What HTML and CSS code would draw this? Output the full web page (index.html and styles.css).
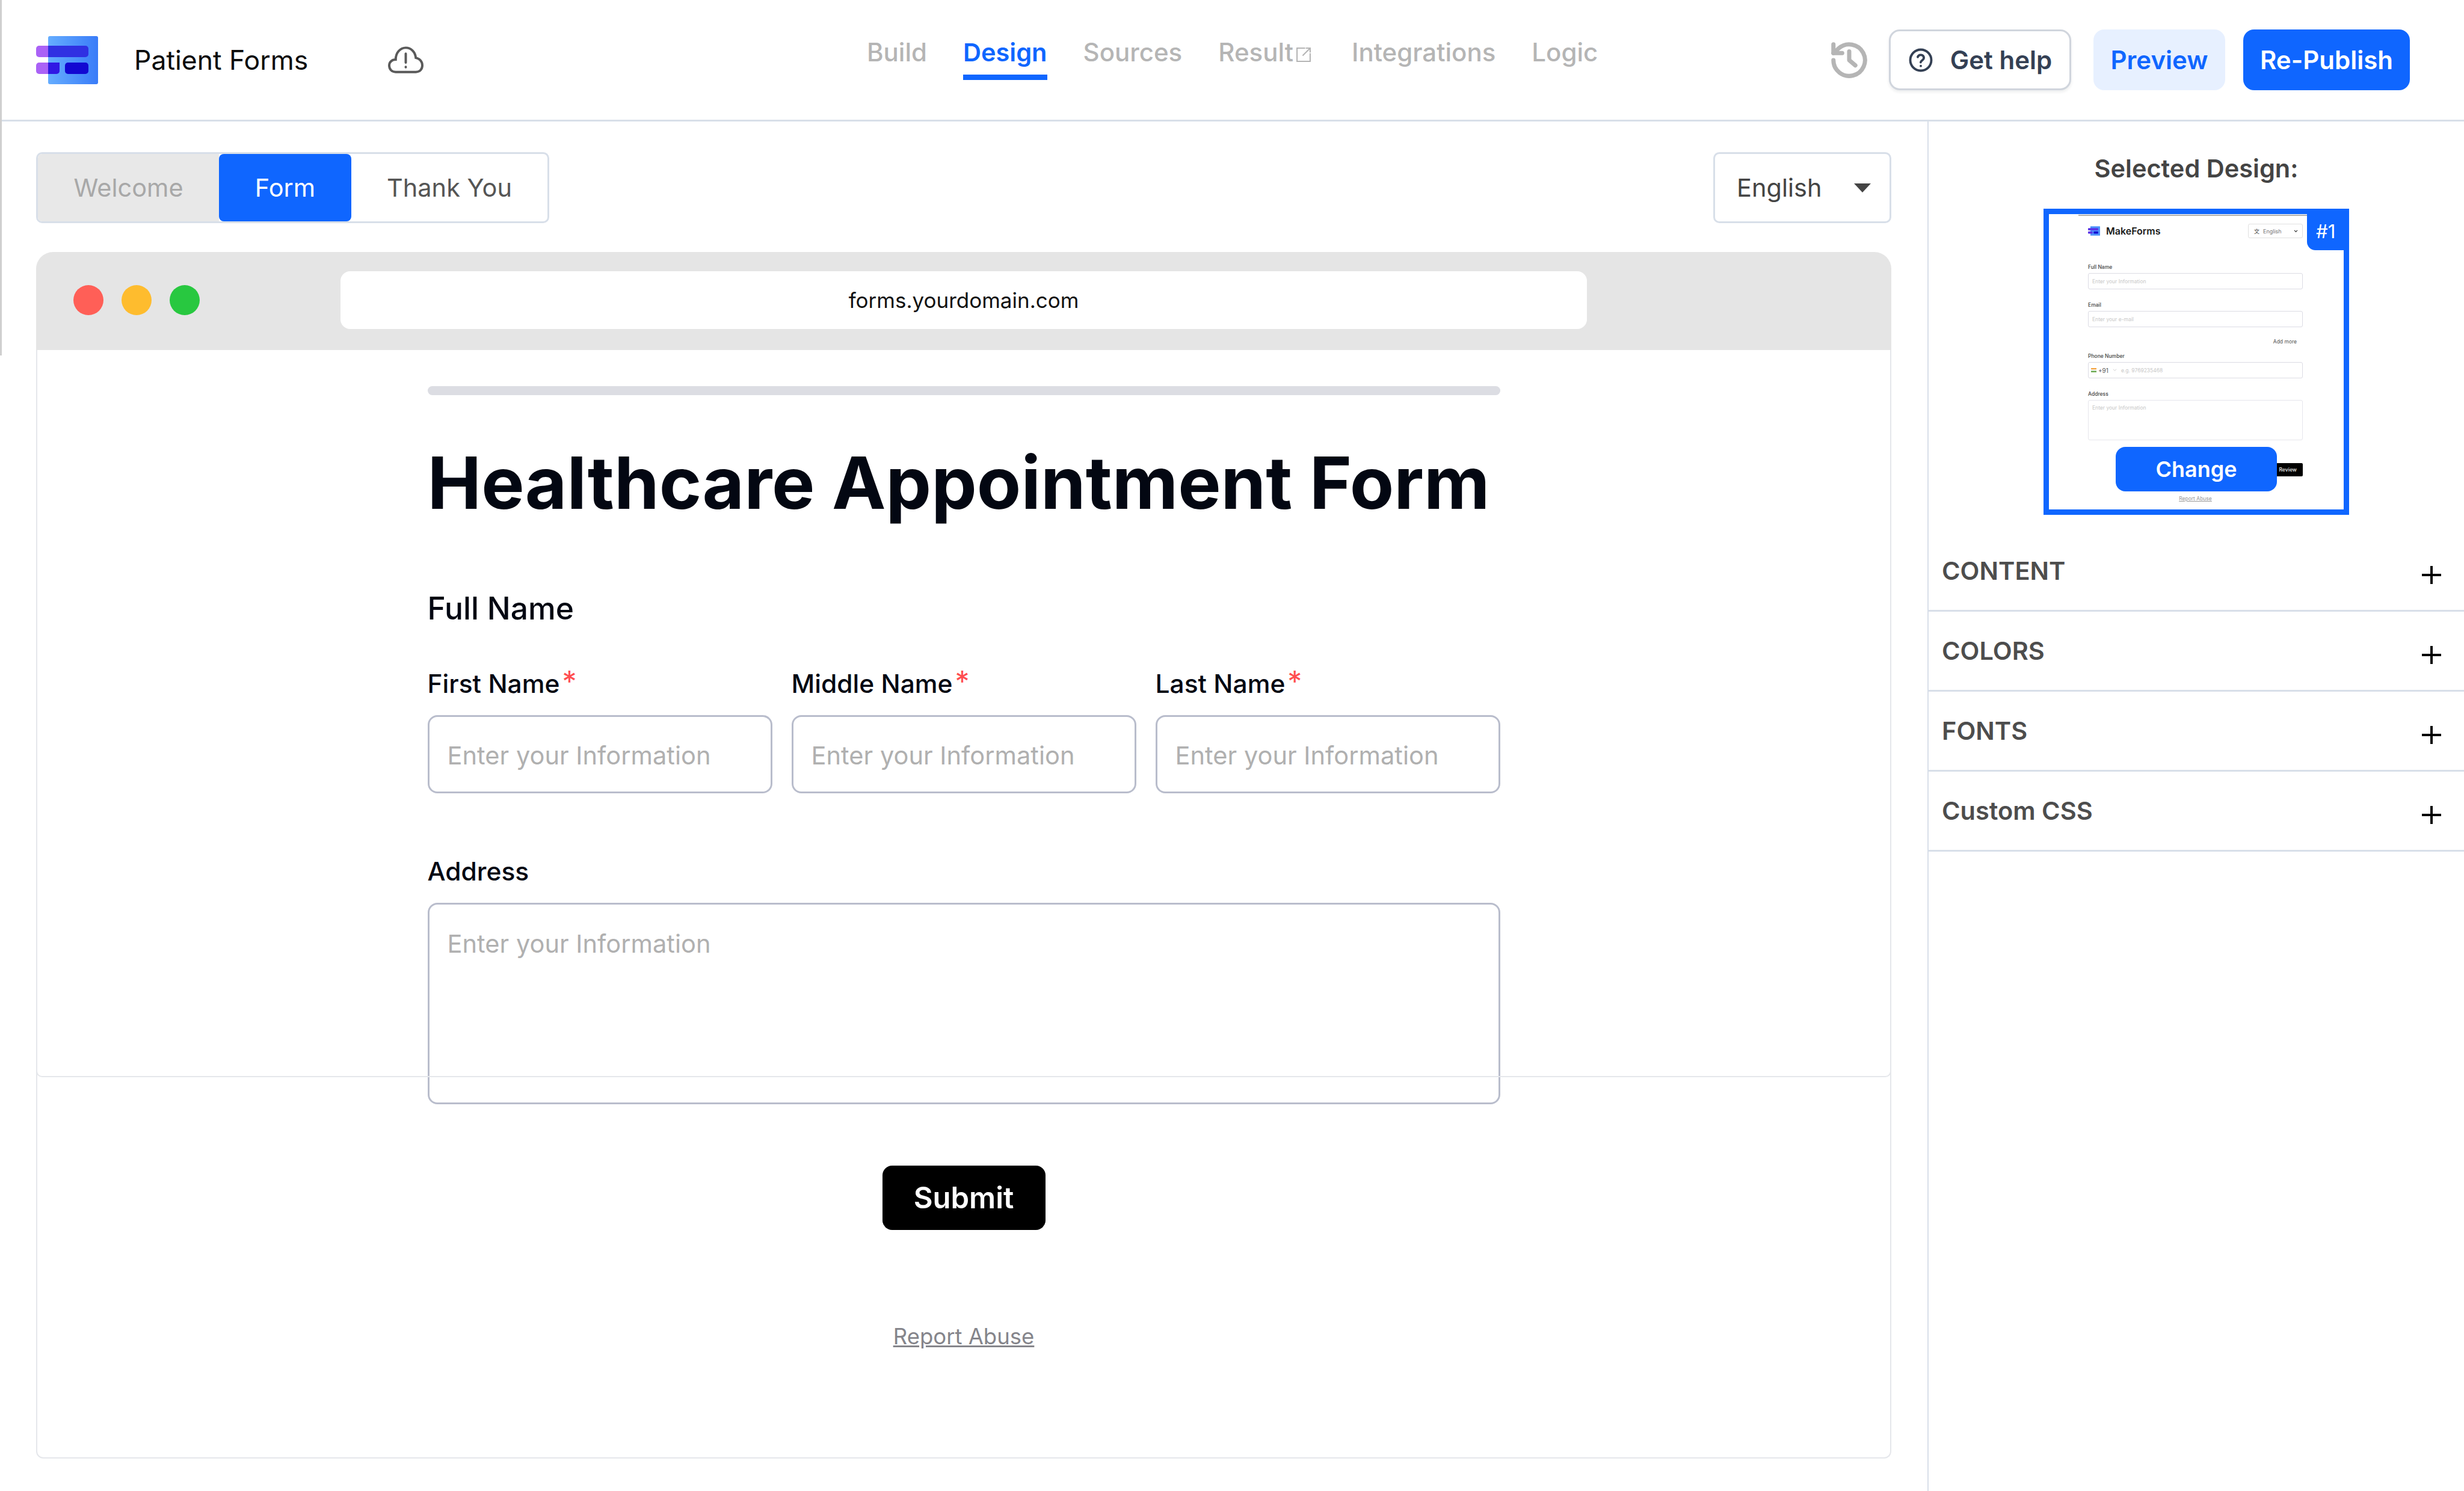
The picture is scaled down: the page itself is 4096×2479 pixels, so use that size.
FILE: index.html
```html
<!DOCTYPE html>
<html lang="en">
<head>
<meta charset="utf-8">
<title>Patient Forms</title>
<link rel="stylesheet" href="styles.css">
</head>
<body>
<div class="edge-line"></div>
<header class="topbar">
  <div class="brand">
    <svg class="logo" viewBox="0 0 103 80">
      <defs><linearGradient id="lg" x1="0" x2="1" y1="0" y2="0"><stop offset="0" stop-color="#65adff"/><stop offset="1" stop-color="#3a7cf8"/></linearGradient></defs>
      <rect x="20" y="0" width="83" height="80" rx="3" fill="url(#lg)"/>
      <path d="M20 16H5a5 5 0 0 0-5 5v9a5 5 0 0 0 5 5h15z" fill="#aa62f6"/>
      <path d="M20 44H5a5 5 0 0 0-5 5v9a5 5 0 0 0 5 5h15z" fill="#aa62f6"/>
      <path d="M20 16H82a5 5 0 0 1 5 5v9a5 5 0 0 1-5 5H20z" fill="#3030e2"/>
      <path d="M20 44H39v14a5 5 0 0 1-5 5H20z" fill="#3018e4"/>
      <rect x="48" y="44" width="39" height="19" rx="5" fill="#1208d2"/>
    </svg>
    <span class="brand-name">Patient Forms</span>
    <svg class="cloud" viewBox="0 0 60 46" fill="none" stroke="#5a5a5a" stroke-width="4" stroke-linecap="round">
      <path d="M13 43C6 43 2 38 2 32C2 26 7 22 13 22C13 10 21 2 30 2C39 2 46 9 47 19C53 20 58 25 58 32C58 38 54 43 47 43Z"/>
      <path d="M30 12V27M30 34.500V35"/>
    </svg>
  </div>
  <nav class="nav">
    <span class="nav-item">Build</span>
    <span class="nav-item nav-active">Design</span>
    <span class="nav-item">Sources</span>
    <span class="nav-item nav-result">Result<svg class="ext" viewBox="0 0 25 25" fill="none" stroke="#b5b5b5" stroke-width="2"><path d="M15 2H2V23H23V10M11 14L23 2M16 2H23V9"/></svg></span>
    <span class="nav-item">Integrations</span>
    <span class="nav-item">Logic</span>
  </nav>
  <div class="actions">
    <svg class="history" viewBox="0 0 24 24" fill="none" stroke="#b5b5b5" stroke-width="2.400" stroke-linecap="round" stroke-linejoin="round">
      <path d="M3 12a9 9 0 1 0 3-6.700L3 8"/><path d="M3 3v5h5"/><path d="M12 7v5l3.500 3"/>
    </svg>
    <button class="btn btn-help">
      <svg class="help-icon" viewBox="0 0 24 24" fill="none" stroke="#344054" stroke-width="2.200" stroke-linecap="round" stroke-linejoin="round">
        <circle cx="12" cy="12" r="10"/><path d="M9.100 9a3 3 0 0 1 5.800 1c0 2-3 2.500-3 4"/><path d="M12 17.500h.01"/>
      </svg>Get help</button>
    <button class="btn btn-preview">Preview</button>
    <button class="btn btn-publish">Re-Publish</button>
  </div>
</header>

<div class="workspace">
  <main class="canvas">
    <div class="canvas-top">
      <div class="tabs">
        <span class="tab tab-off">Welcome</span>
        <span class="tab tab-on">Form</span>
        <span class="tab tab-idle">Thank You</span>
      </div>
      <div class="lang">English<span class="caret"></span></div>
    </div>
    <section class="browser">
      <div class="browser-bar">
        <span class="dot dot-red"></span>
        <span class="dot dot-yellow"></span>
        <span class="dot dot-green"></span>
        <div class="url">forms.yourdomain.com</div>
      </div>
      <div class="browser-body">
        <div class="form">
          <div class="progress"></div>
          <h1 class="form-title">Healthcare Appointment Form</h1>
          <h2 class="group-title">Full Name</h2>
          <div class="name-grid">
            <div class="field">
              <label class="label">First Name<span class="req">*</span></label>
              <div class="input">Enter your Information</div>
            </div>
            <div class="field">
              <label class="label">Middle Name<span class="req">*</span></label>
              <div class="input">Enter your Information</div>
            </div>
            <div class="field">
              <label class="label">Last Name<span class="req">*</span></label>
              <div class="input">Enter your Information</div>
            </div>
          </div>
          <label class="label label-address">Address</label>
          <div class="textarea">Enter your Information</div>
          <div class="submit-wrap"><button class="submit">Submit</button></div>
          <div class="report-wrap"><a class="report">Report Abuse</a></div>
        </div>
        <div class="viewport-frame"></div>
      </div>
    </section>
  </main>

  <aside class="sidebar">
    <div class="sel-title">Selected Design:</div>
    <div class="thumb">
      <div class="thumb-rule"></div>
      <div class="thumb-badge">#1</div>
      <div class="thumb-page">
        <div class="t-head">
          <svg class="t-logo" viewBox="0 0 103 80">
            <rect x="20" width="83" height="80" rx="3" fill="#4d92fb"/>
            <rect y="16" width="87" height="19" rx="5" fill="#5a35e6"/>
            <rect y="44" width="39" height="19" rx="5" fill="#5a35e6"/>
            <rect x="48" y="44" width="39" height="19" rx="5" fill="#1208d2"/>
          </svg>
          <span class="t-brand">MakeForms</span>
          <span class="t-lang"><span class="t-zh">文</span><span class="t-en">English</span><svg class="t-chev" viewBox="0 0 8 6" fill="none" stroke="#333" stroke-width="1.400"><path d="M1 1l3 3 3-3"/></svg></span>
        </div>
        <div class="t-label t-first">Full Name</div>
        <div class="t-input">Enter your Information</div>
        <div class="t-label t-next">Email</div>
        <div class="t-input">Enter your e-mail</div>
        <div class="t-more">Add more</div>
        <div class="t-label t-phone-label">Phone Number</div>
        <div class="t-input t-phone">
          <svg class="t-flag" viewBox="0 0 9 7"><rect width="9" height="2.400" fill="#f4a23c"/><rect y="2.400" width="9" height="2.200" fill="#f4f4ee"/><rect y="4.600" width="9" height="2.400" fill="#6aa84f"/></svg>
          <span class="t-code">+91</span>
          <svg class="t-chev2" viewBox="0 0 8 6" fill="none" stroke="#c4c4c4" stroke-width="1"><path d="M1 1l3 3 3-3"/></svg>
          <span>e.g. 9769235468</span>
        </div>
        <div class="t-label t-next">Address</div>
        <div class="t-area">Enter your Information</div>
        <div class="t-review-row"><span class="t-review">Review</span></div>
        <div class="t-report">Report Abuse</div>
      </div>
      <button class="change">Change</button>
    </div>
    <div class="acc">
      <div class="acc-row"><span>CONTENT</span><svg class="plus" viewBox="0 0 32 30" stroke="#000" stroke-width="4"><path d="M0 15H32M16 0V30"/></svg></div>
      <div class="acc-row"><span>COLORS</span><svg class="plus" viewBox="0 0 32 30" stroke="#000" stroke-width="4"><path d="M0 15H32M16 0V30"/></svg></div>
      <div class="acc-row"><span>FONTS</span><svg class="plus" viewBox="0 0 32 30" stroke="#000" stroke-width="4"><path d="M0 15H32M16 0V30"/></svg></div>
      <div class="acc-row"><span>Custom CSS</span><svg class="plus" viewBox="0 0 32 30" stroke="#000" stroke-width="4"><path d="M0 15H32M16 0V30"/></svg></div>
    </div>
  </aside>
</div>
</body>
</html>
```

FILE: styles.css
```css
* { box-sizing: border-box; }
html, body { margin: 0; padding: 0; }
body {
  position: relative;
  width: 4096px;
  height: 2479px;
  overflow: hidden;
  background: #fff;
  font-family: "Inter", "Noto Sans CJK SC", sans-serif;
  color: #030712;
}
button { font-family: inherit; border: 0; padding: 0; }

.edge-line { position: absolute; left: 0; top: 0; width: 3px; height: 591px; background: #cfcfcf; }

/* top bar */
.topbar {
  height: 202px;
  border-bottom: 3px solid #d8dfe9;
  display: flex;
  align-items: center;
}
.brand { width: 1441px; padding-left: 60px; display: flex; align-items: center; flex: none; }
.logo { width: 103px; height: 80px; flex: none; }
.brand-name { margin-left: 60px; font-size: 44.500px; line-height: 60px; color: #0b0b0b; width: 422px; flex: none; }
.cloud { width: 59px; height: 46px; flex: none; }

.nav { display: flex; gap: 60px; height: 199px; padding-top: 62px; flex: none; }
.nav-item { font-size: 42px; line-height: 50px; height: 71px; font-weight: 500; color: #b5b5b5; }
.nav-active { font-size: 41.500px; color: #0f66ff; font-weight: 600; border-bottom: 9px solid #0f66ff; }
.nav-result { display: flex; align-items: flex-start; }
.ext { width: 26px; height: 26px; margin: 16px 7px 0 4px; flex: none; }

.actions { margin-left: auto; padding-right: 90px; display: flex; align-items: center; flex: none; }
.history { width: 70px; height: 70px; margin-right: 31px; flex: none; }
.btn { height: 101px; border-radius: 18px; font-size: 42px; font-weight: 600; display: flex; align-items: center; justify-content: center; }
.btn-help { width: 303px; background: #fff; border: 3px solid #d0d5dd; box-shadow: 0 3px 5px rgba(16,24,40,.08); color: #344054; margin-right: 37px; }
.help-icon { width: 42px; height: 42px; margin-right: 28px; flex: none; }
.btn-preview { width: 219px; background: #e7f0ff; color: #0f66ff; margin-right: 30px; }
.btn-publish { width: 277px; background: #0f66ff; color: #fff; }

/* layout */
.workspace { display: flex; height: 2277px; }
.canvas { width: 3204px; flex: none; padding: 51px 60px 0; }
.canvas-top { display: flex; justify-content: space-between; height: 118px; }

.tabs { display: flex; width: 853px; height: 118px; border: 3px solid #d8dfe9; border-radius: 10px; overflow: hidden; font-size: 41.500px; }
.tab { display: flex; align-items: center; justify-content: center; }
.tab-off { width: 301px; background: #e8e8e8; color: #a8a8a8; }
.tab-on { width: 220px; background: #0f66ff; color: #fff; border-radius: 8px; }
.tab-idle { flex: 1; color: #555; }

.lang { width: 296px; height: 118px; border: 3px solid #d8dfe9; border-radius: 10px; display: flex; align-items: center; padding-left: 36px; font-size: 41.500px; color: #444; position: relative; }
.caret { width: 0; height: 0; border-left: 14px solid transparent; border-right: 14px solid transparent; border-top: 15px solid #444; margin-left: 54px; }

/* browser */
.browser { margin-top: 48px; }
.browser-bar { height: 163px; background: #e5e5e5; border-radius: 28px 28px 0 0; display: flex; align-items: center; padding: 0 0 3px 62px; }
.dot { width: 50px; height: 50px; border-radius: 50%; margin-right: 30px; flex: none; }
.dot-red { background: #ff5f57; }
.dot-yellow { background: #febc2e; }
.dot-green { background: #28c840; margin-right: 234px; }
.url { width: 2072px; height: 96px; background: #fff; border-radius: 16px; display: flex; align-items: center; justify-content: center; font-size: 35px; color: #111; }

.browser-body { position: relative; height: 1843px; border: 2px solid #e5e7eb; border-top: 0; border-radius: 0 0 12px 12px; }
.viewport-frame { position: absolute; left: -2px; right: -2px; top: 0; height: 1209px; border: 2px solid #e5e7eb; border-top: 0; border-radius: 0 0 10px 10px; }

.form { width: 1783px; margin: 0 auto; padding-top: 60px; }
.progress { height: 15px; background: #dcdde3; border-radius: 8px; }
.form-title { margin: 76px 0 0; font-size: 120px; line-height: 140px; font-weight: 700; white-space: nowrap; color: #030712; }
.group-title { margin: 108px 0 0; font-size: 51.500px; line-height: 60px; font-weight: 500; color: #030712; }
.name-grid { display: grid; grid-template-columns: repeat(3, 1fr); gap: 32px; margin-top: 71px; }
.label { display: block; font-size: 42.500px; line-height: 50px; font-weight: 500; color: #030712; }
.req { color: #ff4d4f; font-size: 48px; font-weight: 400; line-height: 0; position: relative; top: -2px; margin-left: 4px; }
.input { margin-top: 27px; height: 130px; border: 3px solid #b9bdcc; border-radius: 16px; padding: 3px 0 0 30px; display: flex; align-items: center; font-size: 41.600px; color: #b0b0b0; white-space: nowrap; }
.label-address { margin-top: 105px; }
.textarea { margin-top: 27px; height: 335px; border: 3px solid #b9bdcc; border-radius: 16px; padding: 39px 30px; font-size: 41.600px; line-height: 52px; color: #b0b0b0; }
.submit-wrap { display: flex; justify-content: center; margin-top: 102px; }
.submit { width: 271px; height: 107px; background: #000; color: #fff; border-radius: 16px; font-size: 49px; font-weight: 600; }
.report-wrap { text-align: center; margin-top: 152px; line-height: 50px; }
.report { font-size: 36.500px; color: #85858b; text-decoration: underline; }

/* sidebar */
.sidebar { flex: 1; border-left: 2px solid #d8dfe9; padding-top: 53px; }
.sel-title { text-align: center; font-size: 41.500px; line-height: 50px; font-weight: 600; color: #444; }
.thumb { position: relative; width: 508px; height: 509px; margin: 42px auto 0; border: 9px solid #0f66ff; background: #fff; }
.thumb-rule { position: absolute; left: 49px; right: 61px; top: 1px; height: 2px; background: #b0b0b0; }
.thumb-badge { position: absolute; right: -9px; top: -9px; width: 70px; height: 69px; background: #0f66ff; border-radius: 0 0 0 14px; color: #fff; font-size: 31px; line-height: 31px; padding: 22px 0 0 15px; }
.thumb-page { padding: 16px 68px 0 65px; font-size: 8.500px; color: #333; }
.t-head { display: flex; align-items: center; height: 24px; }
.t-logo { width: 20px; height: 16px; flex: none; }
.t-brand { margin-left: 10px; font-size: 16px; font-weight: 600; color: #1a1a1a; }
.t-lang { margin-left: auto; width: 91px; height: 24px; border: 1px solid #e0e0e0; border-radius: 3px; display: flex; align-items: center; padding-left: 9px; color: #666; }
.t-zh { color: #444; font-size: 9px; }
.t-en { margin-left: 6px; color: #777; font-size: 9px; }
.t-chev { width: 7px; height: 5px; margin-left: auto; margin-right: 7px; }
.t-label { line-height: 12px; font-weight: 500; color: #444; }
.t-first { margin-top: 42px; }
.t-next { margin-top: 20px; }
.t-input { margin-top: 4px; height: 27px; border: 1px solid #dcdce4; border-radius: 3px; padding-left: 6px; display: flex; align-items: center; color: #c8c8c8; }
.t-more { margin-top: 18px; line-height: 12px; text-align: right; padding-right: 10px; color: #555; }
.t-phone-label { margin-top: 12px; }
.t-flag { width: 9px; height: 7px; margin-left: -2px; flex: none; }
.t-code { margin-left: 3px; color: #555; font-size: 10px; }
.t-chev2 { width: 7px; height: 5px; margin: 0 7px; flex: none; }
.t-area { margin-top: 4px; height: 67px; border: 1px solid #e6e6ec; border-radius: 3px; padding: 7px 6px; color: #c8c8c8; }
.t-review-row { display: flex; justify-content: flex-end; margin-top: 38px; }
.t-review { width: 70px; height: 22px; background: #000; color: #ddd; border-radius: 2px; display: flex; align-items: center; justify-content: flex-end; padding-right: 10px; font-weight: 600; }
.t-report { margin-top: 31px; text-align: center; line-height: 12px; color: #999; text-decoration: underline; }
.change { position: absolute; left: 111px; top: 387px; width: 268px; height: 74px; border-radius: 16px; background: #0f66ff; color: #fff; font-size: 36px; font-weight: 600; }

.acc { margin-top: 28px; }
.acc-row { height: 133px; border-bottom: 3px solid #d8dfe9; padding: 0 38px 0 22px; display: flex; justify-content: space-between; align-items: center; font-size: 41.500px; font-weight: 600; color: #4d4d4d; }
.plus { width: 32px; height: 30px; margin-top: 14px; flex: none; }
```
